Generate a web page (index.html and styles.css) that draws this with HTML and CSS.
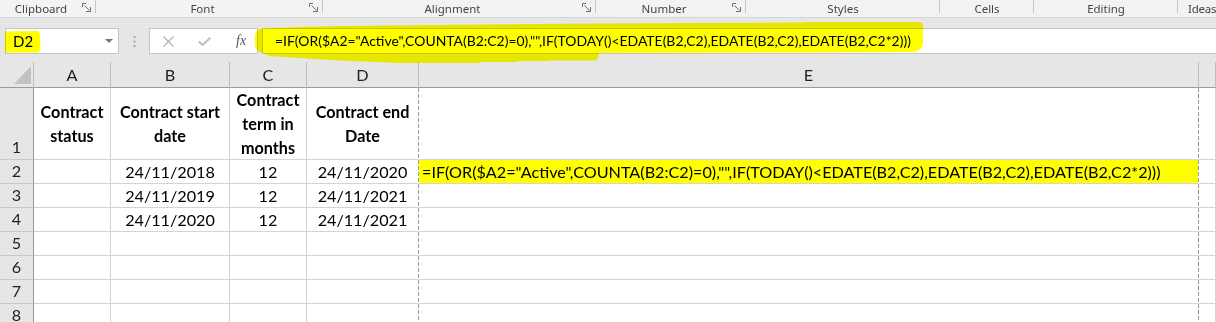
FILE: index.html
```html
<!DOCTYPE html>
<html lang="en">
<head>
	<meta charset="UTF-8">
	<title>Contract end date</title>
	<link rel="stylesheet" href="styles.css">
</head>
<body>
	<div class="ribbon">
		<div class="grp g1"><span class="lbl">Clipboard</span><svg class="launch" viewBox="0 0 9 9"><path d="M0.5 4V0.5H4M2.5 2.5L7.5 7.5M4 8.5H8.5V4"/></svg></div>
		<div class="grp g2"><span class="lbl">Font</span><svg class="launch" viewBox="0 0 9 9"><path d="M0.5 4V0.5H4M2.5 2.5L7.5 7.5M4 8.5H8.5V4"/></svg></div>
		<div class="grp g3"><span class="lbl">Alignment</span><svg class="launch" viewBox="0 0 9 9"><path d="M0.5 4V0.5H4M2.5 2.5L7.5 7.5M4 8.5H8.5V4"/></svg></div>
		<div class="grp g4"><span class="lbl">Number</span><svg class="launch" viewBox="0 0 9 9"><path d="M0.5 4V0.5H4M2.5 2.5L7.5 7.5M4 8.5H8.5V4"/></svg></div>
		<div class="grp g5"><span class="lbl">Styles</span></div>
		<div class="grp g6"><span class="lbl">Cells</span></div>
		<div class="grp g7"><span class="lbl">Editing</span></div>
		<div class="grp g8"><span class="lbl">Ideas</span></div>
	</div>

	<div class="fbar">
		<div class="namebox">
			<span>D2</span>
			<svg class="drop" viewBox="0 0 8 4"><path d="M0 0H8L4 4Z"/></svg>
		</div>
		<div class="grip">
			<svg viewBox="0 0 3 11"><rect x="0.5" y="0" width="2" height="2"/><rect x="0.5" y="4.5" width="2" height="2"/><rect x="0.5" y="9" width="2" height="2"/></svg>
		</div>
		<div class="fbtns">
			<svg class="ico-x" viewBox="0 0 11 11"><path d="M0.5 0.5L10.5 10.5M10.5 0.5L0.5 10.5"/></svg>
			<svg class="ico-ok" viewBox="0 0 13 9"><path d="M0.8 4.6L4.5 8L12.3 0.8"/></svg>
			<span class="fx">fx</span>
		</div>
		<div class="finput">=IF(OR($A2="Active",COUNTA(B2:C2)=0),"",IF(TODAY()&lt;EDATE(B2,C2),EDATE(B2,C2),EDATE(B2,C2*2)))</div>
	</div>

	<div class="sheet">
		<!-- column headers -->
		<div class="ch corner"><svg viewBox="0 0 17 18"><path d="M0 18H17V0Z"/></svg></div>
		<div class="ch">A</div>
		<div class="ch">B</div>
		<div class="ch">C</div>
		<div class="ch">D</div>
		<div class="ch">E</div>
		<div class="ch"></div>

		<!-- row 1 -->
		<div class="rh">1</div>
		<div class="c th">Contract<br>status</div>
		<div class="c th">Contract start<br>date</div>
		<div class="c th">Contract<br>term in<br>months</div>
		<div class="c th pb">Contract end<br>Date</div>
		<div class="c pb"></div>
		<div class="c"></div>

		<!-- row 2 -->
		<div class="rh">2</div>
		<div class="c"></div>
		<div class="c mid">24/11/2018</div>
		<div class="c mid">12</div>
		<div class="c mid pb">24/11/2020</div>
		<div class="c pb"><div class="fill">=IF(OR($A2="Active",COUNTA(B2:C2)=0),"",IF(TODAY()&lt;EDATE(B2,C2),EDATE(B2,C2),EDATE(B2,C2*2)))</div></div>
		<div class="c"></div>

		<!-- row 3 -->
		<div class="rh">3</div>
		<div class="c"></div>
		<div class="c mid">24/11/2019</div>
		<div class="c mid">12</div>
		<div class="c mid pb">24/11/2021</div>
		<div class="c pb"></div>
		<div class="c"></div>

		<!-- row 4 -->
		<div class="rh">4</div>
		<div class="c"></div>
		<div class="c mid">24/11/2020</div>
		<div class="c mid">12</div>
		<div class="c mid pb">24/11/2021</div>
		<div class="c pb"></div>
		<div class="c"></div>

		<div class="rh">5</div>
		<div class="c"></div><div class="c"></div><div class="c"></div><div class="c pb"></div><div class="c pb"></div><div class="c"></div>
		<div class="rh">6</div>
		<div class="c"></div><div class="c"></div><div class="c"></div><div class="c pb"></div><div class="c pb"></div><div class="c"></div>
		<div class="rh">7</div>
		<div class="c"></div><div class="c"></div><div class="c"></div><div class="c pb"></div><div class="c pb"></div><div class="c"></div>
		<div class="rh">8</div>
		<div class="c"></div><div class="c"></div><div class="c"></div><div class="c pb"></div><div class="c pb"></div><div class="c"></div>
	</div>

	<!-- highlighter marks drawn over the screenshot -->
	<svg class="marker" viewBox="0 0 1216 322">
		<path d="M5 31.5L37 31Q40.5 31.5 40 36L40.5 48Q40.2 52.5 37 52.5L5 52.5Z"/>
		<path d="M262 28.5Q255 29.5 255 36L255 46Q256 51 262 53L270 56L300 58L340 60.5L400 63L480 63L481 62L517 62L518 61L548 61L549 60.5L597 60.5L599 53L800 52.5L913 52Q922 51 923 43L923 25Q922 22 918 22L805 22L803 22.5L600 23.5L440 25L340 26L300 27Z"/>
	</svg>
</body>
</html>
```

FILE: styles.css
```css
*{
	margin:0;
	padding:0;
	box-sizing:border-box;
}
body{
	width:1216px;
	height:322px;
	overflow:hidden;
	position:relative;
	background:#e6e6e6;
	font-family:Lato,"Liberation Sans",sans-serif;
	color:#000;
}

/* ribbon group labels */
.ribbon{
	display:flex;
	height:18px;
	overflow:hidden;
	background:#f3f3f3;
	border-bottom:1px solid #d5d5d5;
	font-family:"Noto Sans","Open Sans",sans-serif;
	font-size:11.5px;
	color:#444;
}
.grp{
	flex-shrink:0;
	display:flex;
	align-items:center;
	height:17px;
	background:linear-gradient(#c6c6c6,#c6c6c6) right top/1px 13px no-repeat;
}
.grp .lbl{
	flex:1;
	text-align:center;
	line-height:17px;
	white-space:nowrap;
}
.g1{width:96px;}
.g2{width:227px;}
.g3{width:273px;}
.g4{width:150px;}
.g5{width:194px;}
.g6{width:94px;}
.g7{width:144px;}
.g8{
	width:38px;
	padding-left:10px;
	background:none;
}
.g8 .lbl{
	text-align:left;
	letter-spacing:-0.2px;
}
.launch{
	width:9px;
	height:9px;
	margin-right:5px;
	margin-top:-2px;
	fill:none;
	stroke:#707070;
	stroke-width:1;
}

/* formula bar */
.fbar{
	display:flex;
	height:26px;
	margin-top:10px;
	padding-left:5px;
}
.namebox{
	width:114px;
	display:flex;
	align-items:center;
	justify-content:space-between;
	padding:0 5px 0 7px;
	background:#fff;
	border:1px solid #c6c6c6;
	font-size:15px;
}
.drop{
	width:8px;
	height:4px;
	fill:#777;
}
.grip{
	width:30px;
	display:flex;
	align-items:center;
	justify-content:center;
}
.grip svg{
	width:3px;
	height:11px;
	fill:#a3a3a3;
}
.fbtns{
	width:109px;
	display:flex;
	align-items:center;
	padding-left:13px;
	background:#fff;
	border:1px solid #c6c6c6;
}
.ico-x{
	width:11px;
	height:11px;
	fill:none;
	stroke:#b4b4b4;
	stroke-width:1.2;
}
.ico-ok{
	width:13px;
	height:9px;
	margin-left:24px;
	fill:none;
	stroke:#bdbdbd;
	stroke-width:2;
}
.fx{
	margin-left:25px;
	font-family:"Liberation Serif",serif;
	font-style:italic;
	font-size:14px;
	color:#555;
}
.finput{
	flex:1;
	margin-left:4px;
	padding-left:12px;
	background:#fff;
	border:1px solid #c6c6c6;
	border-right:none;
	font-size:13.95px;
	line-height:24px;
	white-space:nowrap;
	overflow:hidden;
}

/* worksheet grid */
.sheet{
	display:grid;
	grid-template-columns:34px 77px 119px 77px 112px 780px 1fr;
	grid-template-rows:26px 72px repeat(7,24px);
	margin-top:8px;
	font-size:16.2px;
}
.ch{
	display:flex;
	align-items:center;
	justify-content:center;
	background:#e6e6e6;
	border-right:1px solid #bcbcbc;
	border-bottom:1px solid #9b9b9b;
	color:#222;
}
.corner{
	align-items:flex-end;
	justify-content:flex-end;
	padding:0 2px 3px 0;
}
.corner svg{
	width:17px;
	height:18px;
	fill:#c2c2c2;
}
.rh{
	display:flex;
	align-items:flex-end;
	justify-content:center;
	line-height:24px;
	background:#e6e6e6;
	border-right:1px solid #9b9b9b;
	border-bottom:1px solid #c8c8c8;
	color:#222;
}
.c{
	background:#fff;
	border-right:1px solid #d4d4d4;
	border-bottom:1px solid #d4d4d4;
	white-space:nowrap;
}
.th{
	display:flex;
	align-items:center;
	justify-content:center;
	text-align:center;
	font-weight:bold;
	line-height:24px;
}
.mid{
	text-align:center;
	line-height:23px;
}
/* page break line */
.pb{
	border-right-color:transparent;
	background-image:repeating-linear-gradient(to bottom,#999 0 4px,transparent 4px 6px);
	background-size:1px 100%;
	background-position:right top;
	background-repeat:no-repeat;
	background-origin:border-box;
}
.fill{
	height:100%;
	padding-left:3px;
	line-height:23px;
	background:#ffff00;
}

.marker{
	position:absolute;
	left:0;
	top:0;
	width:1216px;
	height:322px;
	fill:#ffff00;
	mix-blend-mode:multiply;
	pointer-events:none;
}
```
